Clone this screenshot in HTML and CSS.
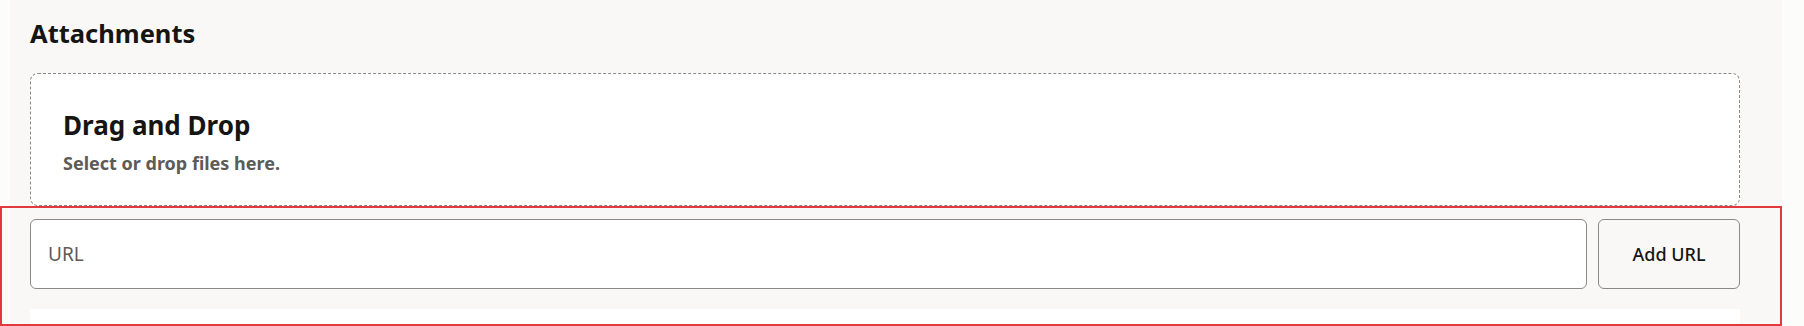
FILE: index.html
```html
<!DOCTYPE html>
<html lang="en">
<head>
<meta charset="utf-8">
<title>Attachments</title>
<link rel="stylesheet" href="styles.css">
</head>
<body>
<div class="panel">
  <h2 class="title">Attachments</h2>
  <div class="dropzone">
    <div class="dz-title">Drag and Drop</div>
    <div class="dz-sub">Select or drop files here.</div>
  </div>
  <div class="url-row">
    <input class="url-input" type="text" placeholder="URL">
    <button class="add-btn" type="button">Add URL</button>
  </div>
  <div class="list-card"></div>
</div>
<div class="highlight"></div>
</body>
</html>
```

FILE: styles.css
```css
html, body {
  margin: 0;
  padding: 0;
  height: 326px;
  overflow: hidden;
  background: #fcfcfb;
  font-family: "Noto Sans", "Liberation Sans", sans-serif;
  color: #161513;
}
.panel {
  margin-left: 10px;
  width: 1772px;
  height: 326px;
  box-sizing: border-box;
  overflow: hidden;
  background: #f9f8f6;
  padding: 17px 42px 0 20px;
}
.title {
  margin: 0;
  font-size: 25.5px;
  line-height: 32px;
  font-weight: 700;
}
.dropzone {
  margin-top: 24px;
  height: 133px;
  box-sizing: border-box;
  border: 1px dashed #8b8985;
  border-radius: 8px;
  background: #ffffff;
  padding: 35px 32px 0 32px;
}
.dz-title {
  font-size: 26px;
  line-height: 32px;
  font-weight: 700;
}
.dz-sub {
  margin-top: 10px;
  font-size: 18px;
  line-height: 24px;
  font-weight: 700;
  color: #5d5b57;
}
.url-row {
  display: flex;
  gap: 11px;
  margin-top: 13px;
}
.url-input {
  flex: 1;
  height: 70px;
  box-sizing: border-box;
  border: 1px solid #8b8985;
  border-radius: 6px;
  background: #ffffff;
  padding: 0 17px;
  font-family: inherit;
  font-size: 19px;
  color: #161513;
  outline: none;
}
.url-input::placeholder {
  color: #5d5b57;
}
.add-btn {
  width: 142px;
  height: 70px;
  box-sizing: border-box;
  border: 1px solid #8b8985;
  border-radius: 6px;
  background: #f9f8f6;
  font-family: inherit;
  font-size: 18px;
  font-weight: 500;
  color: #161513;
  padding: 0;
}
.list-card {
  margin-top: 20px;
  height: 17px;
  background: #ffffff;
}
.highlight {
  position: absolute;
  left: 0;
  top: 206px;
  width: 1782px;
  height: 120px;
  box-sizing: border-box;
  border: 2px solid #e0393e;
  pointer-events: none;
}
```
